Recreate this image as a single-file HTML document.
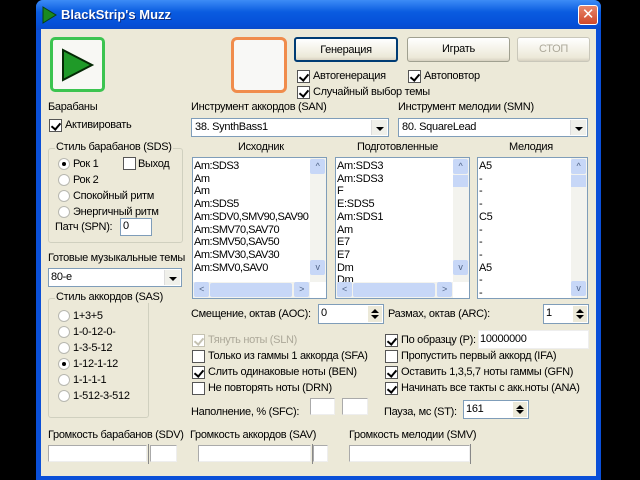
<!DOCTYPE html>
<html><head><meta charset="utf-8"><style>
*{box-sizing:border-box;margin:0;padding:0}
body{width:640px;height:480px;background:#000;position:relative;overflow:hidden;font-family:"Liberation Sans","DejaVu Sans",sans-serif;font-size:11px;letter-spacing:-0.3px;color:#000}
.win{position:absolute;left:36px;top:0;width:565px;height:480px;background:#0a4fd8;border-radius:7px 7px 0 0}
.title{position:absolute;left:0;top:0;width:565px;height:30px;border-radius:7px 7px 0 0;background:linear-gradient(#3d8cf6,#0a5ce0 40%,#0550d8 80%,#0a4ac8)}
.body{position:absolute;left:41px;top:29px;width:555px;height:447px;background:#ece9d8}
.a{position:absolute;white-space:nowrap}
.cb{position:absolute;width:13px;height:13px;background:#fff;border:1px solid #555}
.cb.k::after{content:"";position:absolute;left:3px;top:1px;width:4px;height:7px;border:solid #000;border-width:0 2px 2px 0;transform:rotate(40deg)}
.cb.d{border-color:#c5c2b2}.cb.d::after{border-color:#c5c2b2}
.rb{position:absolute;width:12px;height:12px;border-radius:50%;background:#fff;border:1px solid #b8b8b0}
.rb.k::after{content:"";position:absolute;left:3px;top:3px;width:4px;height:4px;border-radius:50%;background:#000}
.in{position:absolute;background:#fff;border:1px solid #7f9db9;white-space:nowrap}
.btn{position:absolute;height:25px;border:1px solid #003c74;border-radius:3px;background:linear-gradient(#fff,#ece9d8 85%,#d6d0c0);text-align:center;line-height:23px}
.dd{position:absolute;right:1px;top:1px;bottom:1px;width:16px;background:#f0f0ea;border-left:1px solid #ddd}
.dd::after{content:"";position:absolute;left:4px;top:7px;border:4px solid transparent;border-top:4px solid #000;border-bottom:0}
.grp{position:absolute;border:1px solid #d0d0bf;border-radius:3px}
.lg{position:absolute;top:-8px;left:6px;background:#ece9d8;padding:0 1px;white-space:nowrap}
.list{position:absolute;background:#fff;border:1px solid #7f9db9;overflow:hidden;line-height:12.7px;padding:2px 0 0 1px;white-space:nowrap}
.vs{position:absolute;right:0;top:0;width:16px;background:#f3f3ee}
.sb{position:absolute;width:15px;height:15px;background:#c7d7f7;border-radius:2px;color:#4d6185;font-size:9px;text-align:center;line-height:15px}
.hs{position:absolute;left:0;bottom:0;height:16px;background:#f3f3ee}
.spin{position:absolute;right:1px;top:1px;bottom:1px;width:14px;background:#ece9d8}
.spin::before{content:"";position:absolute;left:3px;top:3px;border:4px solid transparent;border-bottom:4px solid #000;border-top:0}
.spin::after{content:"";position:absolute;left:3px;bottom:3px;border:4px solid transparent;border-top:4px solid #000;border-bottom:0}
.sl{position:absolute;height:17px;background:#fff;border:1px solid #aaa;border-right-color:#eee;border-bottom-color:#eee}
.thumb{position:absolute;width:3px;height:20px;border-right:1px solid #888}
.gray{color:#aca899}
</style></head><body>
<div class="win"><div class="title"></div></div>
<svg class="a" style="left:41px;top:6px" width="16" height="18"><polygon points="2,1 15,9 2,17" fill="#1a8a20" stroke="#0a4010"/></svg>
<div class="a" style="left:61px;top:7px;color:#fff;font-weight:bold;font-size:13px;letter-spacing:0;text-shadow:1px 1px #0a2a80">BlackStrip's Muzz</div>
<div class="a" style="left:578px;top:5px;width:20px;height:20px;background:linear-gradient(#e8866a,#d0482a);border:1px solid #fff;border-radius:3px;color:#fff;font-weight:bold;font-size:15px;text-align:center;line-height:18px">✕</div>
<div class="body"></div>

<div class="a" style="left:50px;top:37px;width:55px;height:55px;border:3px solid #3cc450;border-radius:5px;background:#f8f8f4"></div>
<svg class="a" style="left:60px;top:47px" width="36" height="36"><polygon points="3,3 32,18 3,33" fill="#1f9a28" stroke="#052a05" stroke-width="2"/></svg>
<div class="a" style="left:231px;top:37px;width:56px;height:56px;border:3px solid #f08c4c;border-radius:6px;background:#f8f8f6"></div>

<div class="btn" style="left:294px;top:37px;width:104px;border-width:2px">Генерация</div>
<div class="btn" style="left:407px;top:37px;width:103px;border-color:#a0a090">Играть</div>
<div class="btn gray" style="left:517px;top:37px;width:73px;border-color:#c9c7ba">СТОП</div>

<div class="cb k" style="left:297px;top:70px"></div><div class="a" style="left:313px;top:70px">Автогенерация</div>
<div class="cb k" style="left:408px;top:70px"></div><div class="a" style="left:424px;top:70px">Автоповтор</div>
<div class="cb k" style="left:297px;top:86px"></div><div class="a" style="left:313px;top:86px">Случайный выбор темы</div>

<div class="a" style="left:48px;top:101px">Барабаны</div>
<div class="cb k" style="left:49px;top:119px"></div><div class="a" style="left:65px;top:119px">Активировать</div>

<div class="a" style="left:191px;top:101px">Инструмент аккордов (SAN)</div>
<div class="in" style="left:191px;top:118px;width:198px;height:19px;padding:2px 3px">38. SynthBass1<div class="dd"></div></div>
<div class="a" style="left:398px;top:101px">Инструмент мелодии (SMN)</div>
<div class="in" style="left:398px;top:118px;width:190px;height:19px;padding:2px 3px">80. SquareLead<div class="dd"></div></div>

<div class="grp" style="left:48px;top:148px;width:135px;height:95px"><span class="lg">Стиль барабанов (SDS)</span></div>
<div class="rb k" style="left:58px;top:158px"></div><div class="a" style="left:73px;top:158px">Рок 1</div>
<div class="cb" style="left:123px;top:157px"></div><div class="a" style="left:138px;top:158px">Выход</div>
<div class="rb" style="left:58px;top:174px"></div><div class="a" style="left:73px;top:174px">Рок 2</div>
<div class="rb" style="left:58px;top:190px"></div><div class="a" style="left:73px;top:190px">Спокойный ритм</div>
<div class="rb" style="left:58px;top:206px"></div><div class="a" style="left:73px;top:206px">Энергичный ритм</div>
<div class="a" style="left:55px;top:221px">Патч (SPN):</div>
<div class="in" style="left:120px;top:218px;width:32px;height:18px;padding:1px 2px">0</div>

<div class="a" style="left:48px;top:252px">Готовые музыкальные темы</div>
<div class="in" style="left:48px;top:268px;width:134px;height:19px;padding:2px 2px">80-е<div class="dd"></div></div>

<div class="grp" style="left:48px;top:298px;width:101px;height:120px"><span class="lg">Стиль аккордов (SAS)</span></div>
<div class="rb" style="left:58px;top:310px"></div><div class="a" style="left:73px;top:310px">1+3+5</div>
<div class="rb" style="left:58px;top:326px"></div><div class="a" style="left:73px;top:326px">1-0-12-0-</div>
<div class="rb" style="left:58px;top:342px"></div><div class="a" style="left:73px;top:342px">1-3-5-12</div>
<div class="rb k" style="left:58px;top:358px"></div><div class="a" style="left:73px;top:358px">1-12-1-12</div>
<div class="rb" style="left:58px;top:374px"></div><div class="a" style="left:73px;top:374px">1-1-1-1</div>
<div class="rb" style="left:58px;top:390px"></div><div class="a" style="left:73px;top:390px">1-512-3-512</div>

<div class="a" style="left:238px;top:141px">Исходник</div>
<div class="a" style="left:357px;top:141px">Подготовленные</div>
<div class="a" style="left:509px;top:141px">Мелодия</div>

<div class="list" style="left:192px;top:157px;width:135px;height:142px;letter-spacing:-0.5px">Am:SDS3<br>Am<br>Am<br>Am:SDS5<br>Am:SDV0,SMV90,SAV90<br>Am:SMV70,SAV70<br>Am:SMV50,SAV50<br>Am:SMV30,SAV30<br>Am:SMV0,SAV0
<div class="vs" style="height:124px"><div class="sb" style="left:0;top:1px">^</div><div class="sb" style="left:0;top:102px">v</div></div>
<div class="hs" style="width:117px"><div class="sb" style="left:1px;top:0">&lt;</div><div class="sb" style="left:101px;top:0">&gt;</div><div style="position:absolute;left:17px;top:1px;width:82px;height:14px;background:#c7d7f7;border-radius:2px"></div></div></div>

<div class="list" style="left:335px;top:157px;width:135px;height:142px">Am:SDS3<br>Am:SDS3<br>F<br>E:SDS5<br>Am:SDS1<br>Am<br>E7<br>E7<br>Dm<br>Dm
<div class="vs" style="height:124px"><div class="sb" style="left:0;top:1px">^</div><div style="position:absolute;left:0;top:17px;width:15px;height:12px;background:#c7d7f7"></div><div class="sb" style="left:0;top:102px">v</div></div>
<div class="hs" style="width:117px"><div class="sb" style="left:1px;top:0">&lt;</div><div class="sb" style="left:101px;top:0">&gt;</div><div style="position:absolute;left:17px;top:1px;width:82px;height:14px;background:#c7d7f7;border-radius:2px"></div></div></div>

<div class="list" style="left:477px;top:157px;width:111px;height:142px">A5<br>-<br>-<br>-<br>C5<br>-<br>-<br>-<br>A5<br>-<br>-
<div class="vs" style="height:140px"><div class="sb" style="left:0;top:1px">^</div><div style="position:absolute;left:0;top:17px;width:15px;height:12px;background:#c7d7f7"></div><div class="sb" style="left:0;top:123px">v</div></div></div>

<div class="a" style="left:191px;top:308px">Смещение, октав (AOC):</div>
<div class="in" style="left:318px;top:304px;width:66px;height:20px;padding:2px 2px">0<div class="spin"></div></div>
<div class="a" style="left:388px;top:308px">Размах, октав (ARC):</div>
<div class="in" style="left:543px;top:304px;width:46px;height:20px;padding:2px 2px">1<div class="spin"></div></div>

<div class="cb k d" style="left:192px;top:334px"></div><div class="a gray" style="left:208px;top:334px">Тянуть ноты (SLN)</div>
<div class="cb" style="left:192px;top:350px"></div><div class="a" style="left:208px;top:350px">Только из гаммы 1 аккорда (SFA)</div>
<div class="cb k" style="left:192px;top:366px"></div><div class="a" style="left:208px;top:366px">Слить одинаковые ноты (BEN)</div>
<div class="cb" style="left:192px;top:382px"></div><div class="a" style="left:208px;top:382px">Не повторять ноты (DRN)</div>

<div class="cb k" style="left:385px;top:334px"></div><div class="a" style="left:401px;top:334px">По образцу (P):</div>
<div class="in" style="left:478px;top:330px;width:111px;height:19px;padding:2px 1px;border-color:#eee">10000000</div>
<div class="cb" style="left:385px;top:350px"></div><div class="a" style="left:401px;top:350px">Пропустить первый аккорд (IFA)</div>
<div class="cb k" style="left:385px;top:366px"></div><div class="a" style="left:401px;top:366px">Оставить 1,3,5,7 ноты гаммы (GFN)</div>
<div class="cb k" style="left:385px;top:382px"></div><div class="a" style="left:401px;top:382px">Начинать все такты с акк.ноты (ANA)</div>

<div class="a" style="left:191px;top:406px">Наполнение, % (SFC):</div>
<div class="sl" style="left:310px;top:398px;width:25px"></div>
<div class="sl" style="left:342px;top:398px;width:26px"></div>
<div class="a" style="left:384px;top:406px">Пауза, мс (ST):</div>
<div class="in" style="left:463px;top:400px;width:66px;height:19px;padding:2px 2px">161<div class="spin"></div></div>

<div class="a" style="left:48px;top:429px">Громкость барабанов (SDV)</div>
<div class="a" style="left:190px;top:429px">Громкость аккордов (SAV)</div>
<div class="a" style="left:349px;top:429px">Громкость мелодии (SMV)</div>
<div class="sl" style="left:48px;top:445px;width:99px"></div><div class="thumb" style="left:146px;top:444px"></div>
<div class="sl" style="left:150px;top:445px;width:27px"></div>
<div class="sl" style="left:198px;top:445px;width:113px"></div><div class="thumb" style="left:310px;top:444px"></div>
<div class="sl" style="left:313px;top:445px;width:15px"></div>
<div class="sl" style="left:349px;top:445px;width:121px"></div><div class="thumb" style="left:468px;top:444px"></div>
</body></html>
